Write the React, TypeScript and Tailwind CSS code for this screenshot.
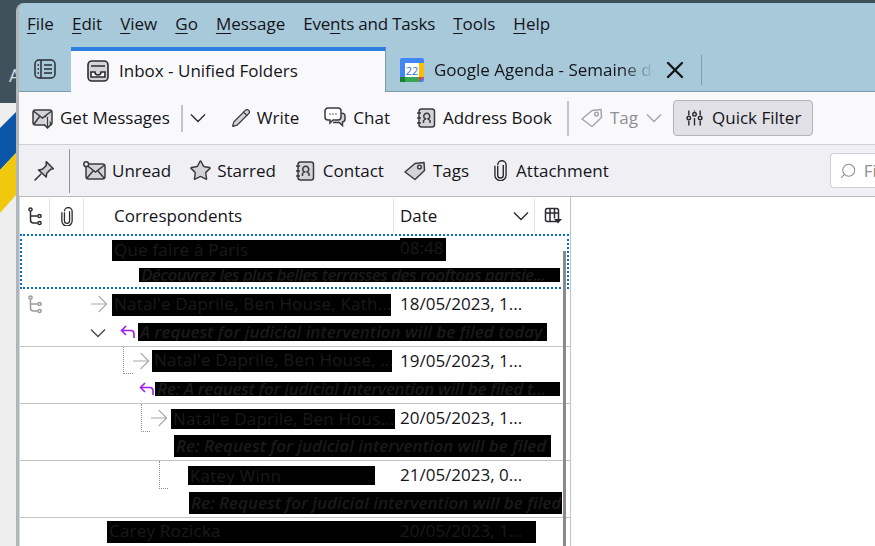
import { ArrowRight, Pencil, Search, Star, X } from "lucide-react";

const menuItems = [
  { pre: "", u: "F", post: "ile" },
  { pre: "", u: "E", post: "dit" },
  { pre: "", u: "V", post: "iew" },
  { pre: "", u: "G", post: "o" },
  { pre: "", u: "M", post: "essage" },
  { pre: "Eve", u: "n", post: "ts and Tasks", tight: true },
  { pre: "", u: "T", post: "ools" },
  { pre: "", u: "H", post: "elp" },
];

const Chevron = ({ className = "", color = "#2b2b30" }: { className?: string; color?: string }) => (
  <svg width="16" height="16" viewBox="0 0 16 16" fill="none" stroke={color} strokeWidth="1.4" className={`shrink-0 ${className}`}>
    <path d="M1 4.500l7 7 7-7" />
  </svg>
);

const Clip = ({ className = "", w = 13, h = 21 }: { className?: string; w?: number; h?: number }) => (
  <svg width={w} height={h} viewBox="0 0 14 22" fill="none" stroke="#2b2b30" strokeWidth="1.5" className={`shrink-0 ${className}`}>
    <path d="M4 6v10a3 3 0 0 0 6 0V5" />
    <path d="M1 6v10a6 6 0 0 0 12 0V5a4.500 4.500 0 0 0-9 0" />
  </svg>
);

const MailIcon = ({ arrow = false }: { arrow?: boolean }) => (
  <svg width="21" height="21" viewBox="0 0 21 21" fill="none" stroke="#3a3a3f" strokeWidth="1.5" className="shrink-0">
    <rect x="1" y="2" width="19" height="15" rx="2.500" fill="#d4d4d8" />
    <path d="M2 3.500 10.500 10 19 3.500M2 16l6-8M19 16l-6-8" />
    {arrow && (
      <g>
        <path d="M15.500 9v11" stroke="#f9f9fb" strokeWidth="4" />
        <path d="M15.500 9v11M12 16.500l3.500 3.500 3.500-3.500" />
      </g>
    )}
  </svg>
);

const BookIcon = () => (
  <svg width="20" height="20" viewBox="0 0 20 20" fill="none" stroke="#3a3a3f" strokeWidth="1.5" className="shrink-0">
    <rect x="3" y="1" width="15.500" height="18" rx="2.500" fill="#d4d4d8" />
    <path d="M1 5h4M1 10h4M1 15h4" />
    <path d="M7.500 15v-2.500L9.500 11a3 3 0 1 1 2.500 0l2 1.500V15" />
  </svg>
);

const TagIcon = ({ color = "#3a3a3f", fill = "#d4d4d8" }: { color?: string; fill?: string }) => (
  <svg width="22" height="20" viewBox="0 0 22 20" fill="none" stroke={color} strokeWidth="1.5" className="shrink-0">
    <path d="M1 11 11 2.500 20 1.500 20.500 9.500 11 18.500Z" fill={fill} strokeLinejoin="round" />
    <circle cx="15.500" cy="6" r="1.800" fill="#fff" />
  </svg>
);

const ReplyIcon = () => (
  <svg width="15" height="14" viewBox="0 0 15 14" fill="none" stroke="#9b1ff0" strokeWidth="1.6">
    <path d="M6 1 1.500 5.500 6 10M1.500 5.500H11a3 3 0 0 1 3 3V13" />
  </svg>
);

const ThreadIcon = ({ color }: { color: string }) => (
  <svg width="14" height="19" viewBox="0 0 14 19" fill="none" stroke={color} strokeWidth="1.5">
    <circle cx="2.500" cy="2.500" r="1.600" />
    <circle cx="11.500" cy="9" r="1.600" />
    <circle cx="11.500" cy="16" r="1.600" />
    <path d="M2.500 4.500V13a3 3 0 0 0 3 3h4M2.500 9h7" />
  </svg>
);

type Row = {
  line1: string;
  name: string;
  date: string;
  redactedDate?: string;
  line2: string;
  subject: string;
  arrow?: string;
  tree?: string;
  chevron?: boolean;
  reply?: string;
  threadIcon?: boolean;
};

const rows: Row[] = [
  {
    line1: "ml-[90px] w-[290px] h-[21px]",
    name: "Que faire à Paris",
    date: "",
    redactedDate: "08:48",
    line2: "ml-[117px] w-[421px] h-[14px] -mt-[6px] tracking-[-0.6px]",
    subject: "Découvrez les plus belles terrasses des rooftops parisie...",
  },
  {
    line1: "ml-[92px] w-[279px] h-[22px] mt-[2px]",
    name: "Natal'e Daprile, Ben House, Kath...",
    date: "18/05/2023, 1...",
    line2: "ml-[118px] w-[409px] h-[18px]",
    subject: "A request for judicial intervention will be filed today",
    arrow: "left-[66px] top-[1px]",
    chevron: true,
    reply: "left-[100px] top-[35px]",
    threadIcon: true,
  },
  {
    line1: "ml-[132px] w-[240px] h-[22px]",
    name: "Natal'e Daprile, Ben House, ...",
    date: "19/05/2023, 1...",
    line2: "ml-[135px] w-[405px] h-[14px] tracking-[-0.3px]",
    subject: "Re: A request for judicial intervention will be filed t...",
    arrow: "left-[108px] top-[1px]",
    tree: "left-[103px] top-0 h-[27px] w-[10px]",
    reply: "left-[119px] top-[35px]",
  },
  {
    line1: "ml-[151px] w-[224px] h-[20px] mt-[2px]",
    name: "Natal'e Daprile, Ben Hous...",
    date: "20/05/2023, 1...",
    line2: "ml-[154px] w-[377px] h-[22px]",
    subject: "Re: Request for judicial intervention will be filed",
    arrow: "left-[126px] top-[1px]",
    tree: "left-[121px] top-0 h-[28px] w-[9px]",
  },
  {
    line1: "ml-[168px] w-[187px] h-[19px]",
    name: "Katey Winn",
    date: "21/05/2023, 0...",
    line2: "ml-[169px] w-[373px] h-[22px]",
    subject: "Re: Request for judicial intervention will be filed",
    tree: "left-[139px] top-0 h-[28px] w-[9px]",
  },
  {
    line1: "ml-[87px] w-[293px] h-[22px]",
    name: "Carey Rozicka",
    date: "",
    redactedDate: "20/05/2023, 1...",
    line2: "ml-[87px] w-0 h-0",
    subject: "",
  },
];

export default function App() {
  return (
    <div
      className="w-[875px] h-[546px] overflow-hidden flex bg-[#3f525b] text-[#15141a]"
      style={{ fontFamily: '"Open Sans", "Noto Sans", sans-serif' }}
    >
      {/* desktop behind the window */}
      <div className="w-[16px] shrink-0 flex flex-col">
        <div className="h-[103px] flex items-center text-[18px] text-[#d5dde0] pl-[9px] pt-[47px] overflow-hidden">A</div>
        <svg width="16" height="443" viewBox="0 0 16 443" className="block">
          <rect width="16" height="443" fill="#eeeeee" />
          <path d="M0 25 16 9V50L0 67Z" fill="#0b55a8" />
          <path d="M0 67 16 50V92L0 110Z" fill="#f0c90f" />
        </svg>
      </div>

      <div className="flex-1 min-w-0 mt-[3px] flex flex-col border-l-[3px] border-[#b3b5b7] rounded-tl-[8px] overflow-hidden bg-[#a7c9da]">
        {/* menu bar */}
        <div className="h-[44px] flex items-center gap-[18px] pl-[8px] pb-[3px] text-[17px] shrink-0">
          {menuItems.map((item) => (
            <span key={item.pre + item.u} className={item.tight ? "tracking-[-0.2px]" : ""}>
              {item.pre}
              <span className="underline underline-offset-[3px]">{item.u}</span>
              {item.post}
            </span>
          ))}
        </div>

        {/* tabs */}
        <div className="h-[45px] flex border-b border-[#7f9aa8] shrink-0">
          <div className="w-[52px] flex items-center justify-center">
            <svg width="22" height="22" viewBox="0 0 22 22" fill="none" stroke="#2b2b30" strokeWidth="1.5">
              <rect x="1" y="2" width="20" height="18" rx="4" />
              <path d="M7 2v18M3.500 7h1.500M3.500 11h1.500M3.500 15h1.500M10 7h8M10 11h8M10 15h8" />
            </svg>
          </div>
          <div className="w-[315px] h-[45px] -mb-px bg-[#f9f9fb] border-t-[4px] border-t-[#2a80dc] border-r border-r-[#7f9aa8] flex items-center pl-[16px] pb-[2px] text-[17px]">
            <svg width="22" height="22" viewBox="0 0 22 22" fill="none" stroke="#2b2b30" strokeWidth="1.6" className="mr-[10px] shrink-0">
              <rect x="1" y="1" width="20" height="20" rx="4" fill="#d4d4d8" />
              <path d="M4 6h14M4 17v-5h4a3 3 0 0 0 6 0h4v5Z" fill="#f9f9fb" />
            </svg>
            Inbox - Unified Folders
          </div>
          <div className="w-[316px] flex items-center pl-[14px] pt-[2px] text-[17px]">
            <svg width="24" height="24" viewBox="0 0 24 24" className="mr-[10px] shrink-0">
              <rect x="0" y="0" width="24" height="24" rx="2" fill="#4285f4" />
              <rect x="5" y="5" width="14" height="14" fill="#fff" />
              <rect x="19" y="5" width="5" height="14" fill="#fbbc04" />
              <rect x="5" y="19" width="14" height="5" fill="#34a853" />
              <rect x="0" y="19" width="5" height="5" fill="#188038" />
              <path d="M19 19h5l-5 5Z" fill="#ea4335" />
              <text x="12" y="16.500" textAnchor="middle" fontSize="11" fill="#2f6fd8" fontFamily="Open Sans">22</text>
            </svg>
            <span className="whitespace-nowrap w-[222px] overflow-hidden [mask-image:linear-gradient(to_right,black_85%,transparent)]">
              Google Agenda - Semaine de
            </span>
            <X size={28} strokeWidth={2} className="ml-[7px] shrink-0" />
            <div className="w-px h-[30px] bg-[#7f9aa8] ml-[12px] shrink-0" />
          </div>
        </div>

        {/* main toolbar */}
        <div className="h-[53px] flex items-center bg-[#f9f9fb] border-b border-[#cfcfd8] pl-[13px] text-[17px] shrink-0">
          <MailIcon arrow />
          <span className="ml-[7px]">Get Messages</span>
          <div className="w-[2px] h-[27px] bg-[#c4c4c8] ml-[11px] shrink-0" />
          <Chevron className="ml-[7px]" />
          <Pencil size={20} strokeWidth={1.5} className="ml-[25px] text-[#3a3a3f] fill-[#d4d4d8] shrink-0" />
          <span className="ml-[6px]">Write</span>
          <svg width="22" height="22" viewBox="0 0 22 22" fill="none" stroke="#3a3a3f" strokeWidth="1.500" className="ml-[25px] shrink-0">
            <path d="M17 6.500a2.800 2.800 0 0 1 4 2.500v3a3 3 0 0 1-2.500 3v3.500L15 15.500H9" fill="#d4d4d8" />
            <path d="M1 4a3 3 0 0 1 3-3h10a3 3 0 0 1 3 3v6a3 3 0 0 1-3 3H9l-3 3v-3H4a3 3 0 0 1-3-3Z" fill="#fff" />
            <path d="M5.500 7h1M8.500 7h1M11.500 7h1" />
          </svg>
          <span className="ml-[7px]">Chat</span>
          <span className="ml-[26px]"><BookIcon /></span>
          <span className="ml-[7px]">Address Book</span>
          <div className="w-[2px] h-[35px] bg-[#c4c4c8] ml-[15px] shrink-0" />
          <span className="ml-[12px]"><TagIcon color="#a5a5a9" fill="#f9f9fb" /></span>
          <span className="ml-[7px] text-[#8f8f94]">Tag</span>
          <Chevron className="ml-[8px]" color="#a5a5a9" />
          <div className="ml-[11px] w-[140px] h-[36px] rounded-[4px] bg-[#e0e0e6] border border-[#b3b3b9] flex items-center pl-[12px] shrink-0">
            <svg width="17" height="18" viewBox="0 0 18 18" fill="none" stroke="#2b2b30" strokeWidth="1.500" className="shrink-0">
              <path d="M3 1v5M9 1v1M15 1v5M3 12v5M9 9v8M15 12v5" />
              <circle cx="3" cy="9" r="1.900" />
              <circle cx="9" cy="5" r="1.900" />
              <circle cx="15" cy="9" r="1.900" />
            </svg>
            <span className="ml-[9px]">Quick Filter</span>
          </div>
        </div>

        {/* filter bar */}
        <div className="h-[52px] flex items-center bg-[#f0f0f4] border-b border-[#b8b8bd] text-[17px] shrink-0">
          <div className="w-[51px] h-[44px] border-r border-[#8f8f9d] flex items-center justify-center shrink-0">
            <svg width="22" height="22" viewBox="0 0 20 20" fill="none" stroke="#3a3a3f" strokeWidth="1.400" strokeLinejoin="round">
              <path d="M12 1.500 18.500 8l-2.500.5-3.500 3.500-.5 3.500L5 9l3.500-.5L12 5Z" fill="#cfcfd4" />
              <path d="M7.500 12.500 1.500 18.500" />
            </svg>
          </div>
          <span className="ml-[13px]">
            <svg width="23" height="20" viewBox="0 0 23 20" fill="none" stroke="#3a3a3f" strokeWidth="1.500" className="shrink-0">
              <rect x="3" y="3" width="19" height="15" rx="2.500" fill="#d4d4d8" />
              <path d="M4 4.500l8.500 6.500L21 4.500M4 17l6-7M21 17l-6-7" />
              <circle cx="3.200" cy="3.200" r="2.400" fill="#f0f0f4" />
            </svg>
          </span>
          <span className="ml-[6px]">Unread</span>
          <Star size={23} strokeWidth={1.5} className="ml-[18px] text-[#3a3a3f] fill-[#d4d4d8] shrink-0" />
          <span className="ml-[5px]">Starred</span>
          <span className="ml-[19px]"><BookIcon /></span>
          <span className="ml-[8px]">Contact</span>
          <span className="ml-[20px]"><TagIcon /></span>
          <span className="ml-[7px]">Tags</span>
          <Clip className="ml-[25px]" />
          <span className="ml-[9px]">Attachment</span>
          <div className="ml-[221px] w-[60px] h-[35px] rounded-l-[4px] bg-white border border-[#cfcfd8] border-r-0 flex items-center pl-[8px] text-[#8f8f94] shrink-0">
            <Search size={18} strokeWidth={1.4} className="-scale-x-100 shrink-0" />
            <span className="ml-[7px]">Fi</span>
          </div>
        </div>

        {/* thread pane */}
        <div className="flex-1 min-h-0 flex bg-white">
          <div className="w-[552px] shrink-0 border-r border-r-[#b4c6de] border-l border-l-[#c9dcee] relative">
            <div className="h-[37px] flex items-center text-[17px] pt-[1px]">
              <div className="w-[30px] h-full border-r border-[#e4e4e7] flex items-center justify-center">
                <ThreadIcon color="#2b2b30" />
              </div>
              <div className="w-[34px] h-full border-r border-[#e4e4e7] flex items-center justify-center">
                <Clip w={12} h={19} />
              </div>
              <div className="w-[310px] h-full border-r border-[#e4e4e7] flex items-center pl-[30px]">Correspondents</div>
              <div className="w-[141px] h-full border-r border-[#e4e4e7] flex items-center justify-between pl-[6px] pr-[5px]">
                Date
                <Chevron />
              </div>
              <div className="flex-1 flex items-center justify-center">
                <svg width="18" height="18" viewBox="0 0 18 18" fill="none" stroke="#2b2b30" strokeWidth="1.500">
                  <rect x="1.500" y="1.500" width="13" height="13" rx="2" />
                  <path d="M1.500 6h13M6 1.500v13M10.500 1.500v10" />
                  <path d="M10 12h8l-4 4.500Z" fill="#2b2b30" stroke="none" />
                </svg>
              </div>
            </div>

            {rows.map((row, i) => (
              <div
                key={row.name}
                className={
                  i === 0
                    ? "relative h-[55px] mb-px mr-[1px] border-[2px] border-dotted border-[#0a6ec8]"
                    : "relative h-[57px] border-b border-[#c4c4c8] overflow-visible"
                }
              >
                {row.tree && <div className={`absolute border-l border-b border-dotted border-[#8f8f94] ${row.tree}`} />}
                {row.threadIcon && (
                  <div className="absolute left-[8px] top-[5px]">
                    <ThreadIcon color="#9a9a9f" />
                  </div>
                )}
                {row.arrow && <ArrowRight size={26} strokeWidth={1.1} className={`absolute text-[#a8a8ac] ${row.arrow}`} />}
                {row.chevron && (
                  <div className="absolute left-[70px] top-[35px]">
                    <Chevron color="#4a4a4f" />
                  </div>
                )}
                {row.reply && (
                  <div className={`absolute ${row.reply}`}>
                    <ReplyIcon />
                  </div>
                )}
                <div className="h-[28px] grid grid-cols-[380px_1fr] items-center text-[17px]">
                  <div className={`bg-black text-[#1a1a1a] overflow-hidden whitespace-nowrap pl-[2px] leading-[20px] tracking-[0.2px] ${row.line1}`}>
                    {row.name}
                  </div>
                  {row.redactedDate ? (
                    <div className={i === 0 ? "bg-black text-[#1a1a1a] h-[23px] w-[46px] -ml-[2px] -mt-[1px] leading-[20px]" : "bg-black text-[#1a1a1a] h-[22px] w-[136px] leading-[20px]"}>
                      {row.redactedDate}
                    </div>
                  ) : (
                    <div className="whitespace-nowrap">{row.date}</div>
                  )}
                </div>
                <div className="h-[28px] flex items-center text-[17px] italic font-semibold">
                  <div className={`bg-black text-[#1a1a1a] overflow-hidden whitespace-nowrap pl-[2px] flex items-center ${row.line2}`}>
                    {row.subject}
                  </div>
                </div>
              </div>
            ))}

            {/* scrollbar */}
            <div className="absolute right-[4px] top-[54px] bottom-0 w-[3px] bg-[#8a8a8a]" />
          </div>
          <div className="flex-1" />
        </div>
      </div>
    </div>
  );
}
